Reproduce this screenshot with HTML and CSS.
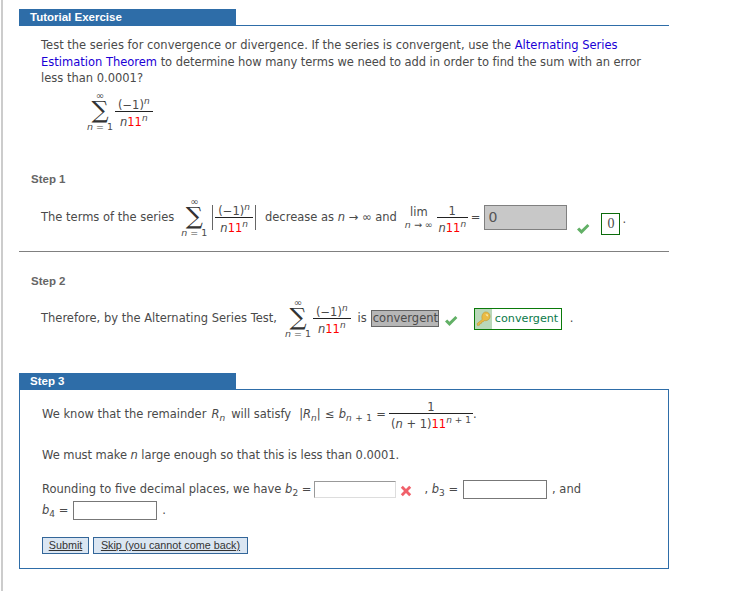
FILE: index.html
```html
<!DOCTYPE html>
<html lang="en">
<head>
<meta charset="utf-8">
<title>Tutorial Exercise</title>
<link rel="stylesheet" href="styles.css">
</head>
<body>
<main class="page">
  <header class="tab-head"><h2 class="tab">Tutorial Exercise</h2></header>
  <section class="intro">
    <p>Test the series for convergence or divergence. If the series is convergent, use the <a href="#">Alternating Series<br>Estimation Theorem</a><span class="fit"> to determine how many terms we need to add in order to find the sum with an error</span><br>less than 0.0001?</p>
    <div class="math intro-math">
      <span class="sum"><span class="lim-top">∞</span><span class="sigma">∑</span><span class="lim-bot"><i>n</i> = 1</span></span>
      <span class="frac"><span class="num">(−1)<sup><i>n</i></sup></span><span class="den"><i>n</i><b class="red">11</b><sup><i>n</i></sup></span></span>
    </div>
  </section>

  <h3 class="step step-one">Step 1</h3>
  <div class="row row-one">
    <span>The terms of the series</span>
    <span class="sum gap-sum"><span class="lim-top">∞</span><span class="sigma">∑</span><span class="lim-bot"><i>n</i> = 1</span></span>
    <span class="abs"><span class="frac"><span class="num">(−1)<sup><i>n</i></sup></span><span class="den"><i>n</i><b class="red">11</b><sup><i>n</i></sup></span></span></span>
    <span class="gap-dec">decrease as <i>n</i> → ∞ and</span>
    <span class="limit"><span>lim</span><span class="lim-bot"><i>n</i> → ∞</span></span>
    <span class="frac small"><span class="num">1</span><span class="den"><i>n</i><b class="red">11</b><sup><i>n</i></sup></span></span>
    <span class="eq">=</span>
    <span class="graded">0</span>
    <svg class="mark check-one" viewBox="0 0 14 12" aria-hidden="true"><path d="M1 6.5 3.2 4.4 5.5 6.7 11.4 1 13.4 3 5.5 11Z"/></svg>
    <span class="zero-box">0</span><span class="dot">.</span>
  </div>
  <hr class="rule">

  <h3 class="step step-two">Step 2</h3>
  <div class="row row-two">
    <span>Therefore, by the Alternating Series Test,</span>
    <span class="sum gap-sum-two"><span class="lim-top">∞</span><span class="sigma">∑</span><span class="lim-bot"><i>n</i> = 1</span></span>
    <span class="frac"><span class="num">(−1)<sup><i>n</i></sup></span><span class="den"><i>n</i><b class="red">11</b><sup><i>n</i></sup></span></span>
    <span class="gap-is">is</span>
    <span class="chosen">convergent</span>
    <svg class="mark check-two" viewBox="0 0 14 12" aria-hidden="true"><path d="M1 6.5 3.2 4.4 5.5 6.7 11.4 1 13.4 3 5.5 11Z"/></svg>
    <span class="answer"><span class="key"><svg viewBox="0 0 16 16" aria-hidden="true"><path class="key-body" d="M6.6 9 1.2 13.4 1.6 15.4 3.6 15.2 4 13.6 5.6 13.4 6 11.8 7.6 11.6 8.6 10.2C11.6 11 15 9 15 5.6 15 3 13 1 10.4 1 7.4 1 5.4 5 6.6 9Z"/><path class="key-hole" d="M10 3.4 12.6 3.6 13 6 11 4.8Z"/></svg></span><span class="answer-text">convergent</span></span>
    <span class="dot-wide">.</span>
  </div>

  <header class="tab-head step-three-head"><h3 class="tab">Step 3</h3></header>
  <section class="panel">
    <div class="row panel-one">
      <span>We know that the remainder</span>
      <span class="gap-r"><i>R<sub>n</sub></i></span>
      <span class="gap-will">will satisfy</span>
      <span class="gap-abs">|<i>R<sub>n</sub></i>| ≤ <i>b<sub>n</sub></i><sub> + 1</sub> =</span>
      <span class="frac wide"><span class="num">1</span><span class="den">(<i>n</i> + 1)<b class="red">11</b><sup><i>n</i> + 1</sup></span></span>
      <span>.</span>
    </div>
    <p class="must fit">We must make <i>n</i> large enough so that this is less than 0.0001.</p>
    <div class="row round-one">
      <span>Rounding to five decimal places, we have <i>b</i><sub>2</sub> =</span>
      <input class="field wrong" type="text" aria-label="b2">
      <svg class="mark cross" viewBox="0 0 12 12" aria-hidden="true"><path d="M.8 2.8 2.8.8 6 4 9.2.8 11.2 2.8 8 6 11.2 9.2 9.2 11.2 6 8 2.8 11.2.8 9.2 4 6Z"/></svg>
      <span class="gap-b3">, <i>b</i><sub>3</sub> =</span>
      <input class="field" type="text" aria-label="b3">
      <span class="gap-and">, and</span>
    </div>
    <div class="row round-two">
      <span><i>b</i><sub>4</sub> =</span>
      <input class="field" type="text" aria-label="b4">
      <span class="gap-period">.</span>
    </div>
    <div class="buttons">
      <button class="btn-submit" type="button">Submit</button>
      <button class="btn-skip" type="button">Skip (you cannot come back)</button>
    </div>
  </section>
</main>
</body>
</html>
```

FILE: styles.css
```css
* { box-sizing: border-box; }
html, body { margin: 0; padding: 0; background: #fff; }
body { font: 11.5px/16.5px "DejaVu Sans", Verdana, sans-serif; color: #4a4a4a; }
.page { margin-left: 1px; border-left: 2px solid #ccc; padding: 9px 0 23px 16px; width: 668px; min-height: 591px; }
i { font-style: italic; }
sub, sup { font-size: 9px; line-height: 0; }
a { color: #1a00d6; text-decoration: none; }
.fit { letter-spacing: -.06px; }

.tab-head { height: 17px; border-bottom: 1px solid #2e6da8; }
.tab { margin: 0; width: 217px; height: 16px; padding-left: 11px; background: #2e6da8; color: #fff; font: bold 11.5px/16px "Liberation Sans", Arial, sans-serif; }

.intro { padding: 11px 0 0 22px; }
.intro p { margin: 0; }
.math { display: flex; align-items: center; }
.intro-math { margin: 4px 0 0 45px; }

.sum { display: inline-flex; flex-direction: column; align-items: center; width: 28px; flex: none; }
.lim-top { font-size: 10px; line-height: 10px; }
.sigma { height: 20px; font: 24px/19px "DejaVu Serif", "Liberation Serif", serif; color: #333; }
.lim-bot { font-size: 9.5px; line-height: 12px; white-space: nowrap; }
.frac { display: inline-flex; flex-direction: column; align-items: center; margin-left: 1px; min-width: 37px; flex: none; }
.frac .num { height: 17px; padding: 4px 3px 0; border-bottom: 1px solid #222; width: 100%; text-align: center; line-height: 12px; }
.frac .den { height: 16px; padding-top: 4px; line-height: 12px; white-space: nowrap; }
.frac.small { min-width: 31px; margin-left: 4px; }
.frac.wide { margin: -2px 0 0 3px; min-width: 84px; }
.red { color: #f00; font-weight: normal; }

.step { margin: 0; padding-left: 12px; font: bold 11.5px/16px "Liberation Sans", Arial, sans-serif; color: #666; }
.step-one { margin-top: 38px; }
.step-two { margin-top: 21px; }

.row { display: flex; align-items: center; white-space: nowrap; }
.row-one { margin: 8px 0 0 22px; height: 46px; }
.gap-sum { margin-left: 6px; }
.gap-sum-two { margin-left: 7px; }
.abs { margin-left: 4px; padding: 0 2px; border-left: 1px solid #666; border-right: 1px solid #666; height: 25px; display: inline-flex; align-items: center; }
.abs .frac { margin: 0; }
.gap-dec { margin-left: 9px; }
.limit { display: inline-flex; flex-direction: column; align-items: center; margin-left: 8px; line-height: 14px; }
.limit .lim-bot { line-height: 11px; }
.eq { margin-left: 3px; }
.graded { margin-left: 4px; width: 83px; height: 25px; background: #c8c8c8; border: 1px solid #808080; padding-left: 3px; color: #555; font-size: 14px; line-height: 22px; }
.mark { flex: none; display: block; }
.mark path { fill: #62b066; }
.check-one { width: 14px; height: 12px; margin: 22px 0 0 9px; }
.zero-box { margin: 12px 0 0 11px; width: 19px; height: 22px; border: 1px solid #0a6b0a; text-align: center; font: 14px/20px "Liberation Serif", serif; }
.dot { margin-left: 2px; margin-top: 4px; }

.rule { margin: 10px 0 0; border: 0; border-top: 1px solid #808080; height: 0; width: 650px; }

.row-two { margin: 7px 0 0 22px; height: 46px; }
.gap-is { margin-left: 7px; }
.chosen { margin-left: 4px; height: 17px; border: 1px solid #666; background: #b6b6b6; padding: 0 1px; line-height: 15px; width: 68px; }
.check-two { width: 14px; height: 12px; margin: 4px 0 0 5px; }
.answer { display: inline-flex; margin-left: 16px; width: 88px; height: 22px; border: 1px solid #0a7a0a; color: #0a7a4a; }
.key { width: 17px; background: #b9d7b9; display: flex; align-items: center; justify-content: center; }
.key svg { width: 15px; height: 15px; }
.mark + .answer .key-body { fill: #e9bb45; stroke: #b88a20; stroke-width: .5; }
.mark + .answer .key-hole { fill: #fbe9a8; }
.answer-text { margin-left: 3px; font-size: 11.2px; line-height: 20px; }
.dot-wide { margin-left: 8px; }

.step-three-head { margin-top: 31px; }
.panel { width: 650px; height: 179px; border: 1px solid #2e6da8; border-top: 0; padding: 11px 0 0 22px; }
.panel-one { height: 28px; }
.gap-r { margin-left: 5px; }
.gap-will { margin-left: 6px; }
.gap-abs { margin-left: 8px; word-spacing: .6px; }
.must { margin: 18px 0 0; }
.round-one { margin-top: 16px; height: 20px; }
.round-two { margin-top: 1px; height: 20px; }
.field { width: 84px; height: 19px; border: 1px solid #777; background: #fff; margin: 0 0 0 5px; padding: 0; }
.field.wrong { border: 1px solid #ddd; border-top-color: #999; border-left-color: #999; width: 82px; height: 17px; margin-left: 3px; }
.cross { width: 12px; height: 12px; margin: 3px 0 0 4px; }
.mark.cross path { fill: #f0606a; }
.gap-b3 { margin-left: 12px; }
.gap-and { margin-left: 5px; }
.gap-period { margin-left: 5px; }
.buttons { display: flex; gap: 4px; margin-top: 17px; }
button { height: 17px; padding: 0; background: #dbe6f2; border: 1px solid #336699; color: #333; font: 10.8px/15px "Liberation Sans", Arial, sans-serif; text-decoration: underline; }
.btn-submit { width: 47px; }
.btn-skip { width: 155px; }
```
